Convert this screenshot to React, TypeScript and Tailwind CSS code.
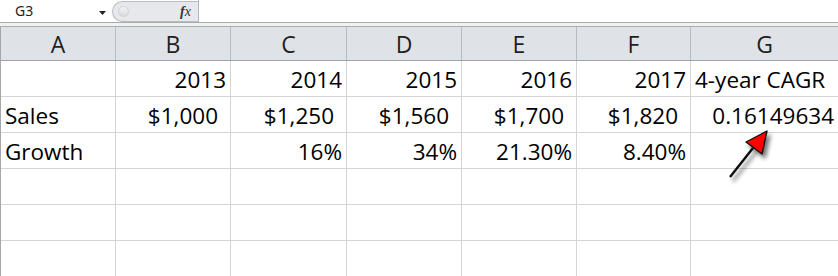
import React from "react";

const letters = ["A", "B", "C", "D", "E", "F", "G"];

type Cell = { t: string; align?: "l" | "r"; cur?: boolean };

const empty: Cell[] = [{ t: "" }, { t: "" }, { t: "" }, { t: "" }, { t: "" }, { t: "" }, { t: "" }];

const rows: Cell[][] = [
  [
    { t: "" },
    { t: "2013", align: "r" },
    { t: "2014", align: "r" },
    { t: "2015", align: "r" },
    { t: "2016", align: "r" },
    { t: "2017", align: "r" },
    { t: "4-year CAGR", align: "l" },
  ],
  [
    { t: "Sales", align: "l" },
    { t: "$1,000", align: "r", cur: true },
    { t: "$1,250", align: "r", cur: true },
    { t: "$1,560", align: "r", cur: true },
    { t: "$1,700", align: "r", cur: true },
    { t: "$1,820", align: "r", cur: true },
    { t: "0.16149634", align: "r" },
  ],
  [
    { t: "Growth", align: "l" },
    { t: "" },
    { t: "16%", align: "r" },
    { t: "34%", align: "r" },
    { t: "21.30%", align: "r" },
    { t: "8.40%", align: "r" },
    { t: "" },
  ],
  empty,
  empty,
  empty,
];

const gridTemplate = "115px 115px 116px 115px 115px 114px 1fr";

export default function App() {
  return (
    <div
      className="relative w-[838px] h-[276px] overflow-hidden bg-white"
      style={{ fontFamily: '"Open Sans", "Noto Sans", sans-serif' }}
    >
      {/* Formula bar */}
      <div className="flex h-[22px] bg-white">
        <div className="flex w-[112px] items-center pl-[15px] pr-[6px]">
          <span
            className="flex-1 text-[14px] leading-none text-[#1e1e1e]"
            style={{ fontFamily: '"Noto Sans", "Open Sans", sans-serif' }}
          >
            G3
          </span>
          <svg width="7" height="4" viewBox="0 0 7 4" className="mt-[3px]">
            <path d="M0 0 H7 L3.5 4 Z" fill="#222" />
          </svg>
        </div>
        <div className="relative mt-[1px] flex h-[21px] w-[86px] items-center rounded-l-full border border-r-0 border-[#b9bcc2] bg-[#e7e8eb]">
          <div className="ml-[5px] h-[11px] w-[11px] rounded-full border border-[#cfd1d5] bg-gradient-to-b from-[#f3f4f5] to-[#d8dadd]" />
          <span
            className="ml-auto mr-[7px] text-[14px] italic leading-none text-[#333]"
            style={{ fontFamily: '"Liberation Serif", "DejaVu Serif", serif' }}
          >
            <span className="font-bold">f</span>x
          </span>
        </div>
        <div className="h-full flex-1 border-l border-[#b5b5b5] bg-white" />
      </div>
      <div className="h-[5px] border-t border-b border-[#a9abaf] bg-[#eef0f2]" />

      {/* Grid */}
      <div className="border-l border-[#a3a6ab]">
        {/* Column header */}
        <div
          className="grid h-[34px] border-b border-[#9ea3aa] bg-[#dfe3e8]"
          style={{ gridTemplateColumns: gridTemplate }}
        >
          {letters.map((l, i) => (
            <div
              key={l}
              className={`flex items-end justify-center pb-[1px] text-[23px] leading-[30px] text-[#1f1f1f] ${
                i < 6 ? "border-r border-[#b6bcc4]" : ""
              }`}
            >
              {l}
            </div>
          ))}
        </div>

        {rows.map((r, ri) => (
          <div
            key={ri}
            className="grid h-[36px] border-b border-[#d4d4d4]"
            style={{ gridTemplateColumns: gridTemplate }}
          >
            {r.map((c, ci) => (
              <div
                key={ci}
                className={`flex items-end overflow-visible whitespace-nowrap pb-[1px] text-[22.5px] leading-[30px] text-black ${
                  ci < 6 ? "border-r border-[#d4d4d4]" : ""
                } ${
                  c.align === "r"
                    ? c.cur
                      ? "justify-end pr-[12px]"
                      : "justify-end pr-[4px]"
                    : "justify-start pl-[4px]"
                }`}
              >
                {c.t}
              </div>
            ))}
          </div>
        ))}
      </div>

      {/* Arrow annotation */}
      <svg
        className="pointer-events-none absolute left-[720px] top-[125px]"
        width="60"
        height="64"
        viewBox="720 125 60 64"
      >
        <defs>
          <filter id="sh" x="-50%" y="-50%" width="200%" height="200%">
            <feGaussianBlur in="SourceAlpha" stdDeviation="2.2" />
            <feOffset dx="3" dy="4" result="b" />
            <feComponentTransfer>
              <feFuncA type="linear" slope="0.55" />
            </feComponentTransfer>
            <feMerge>
              <feMergeNode />
              <feMergeNode in="SourceGraphic" />
            </feMerge>
          </filter>
        </defs>
        <g filter="url(#sh)">
          <line x1="730" y1="177" x2="753" y2="148" stroke="#111" strokeWidth="2.4" />
          <path
            d="M746 142 L767 131 L762 154 Z"
            fill="#ff0000"
            stroke="#111"
            strokeWidth="1.4"
            strokeLinejoin="round"
          />
        </g>
      </svg>
    </div>
  );
}
